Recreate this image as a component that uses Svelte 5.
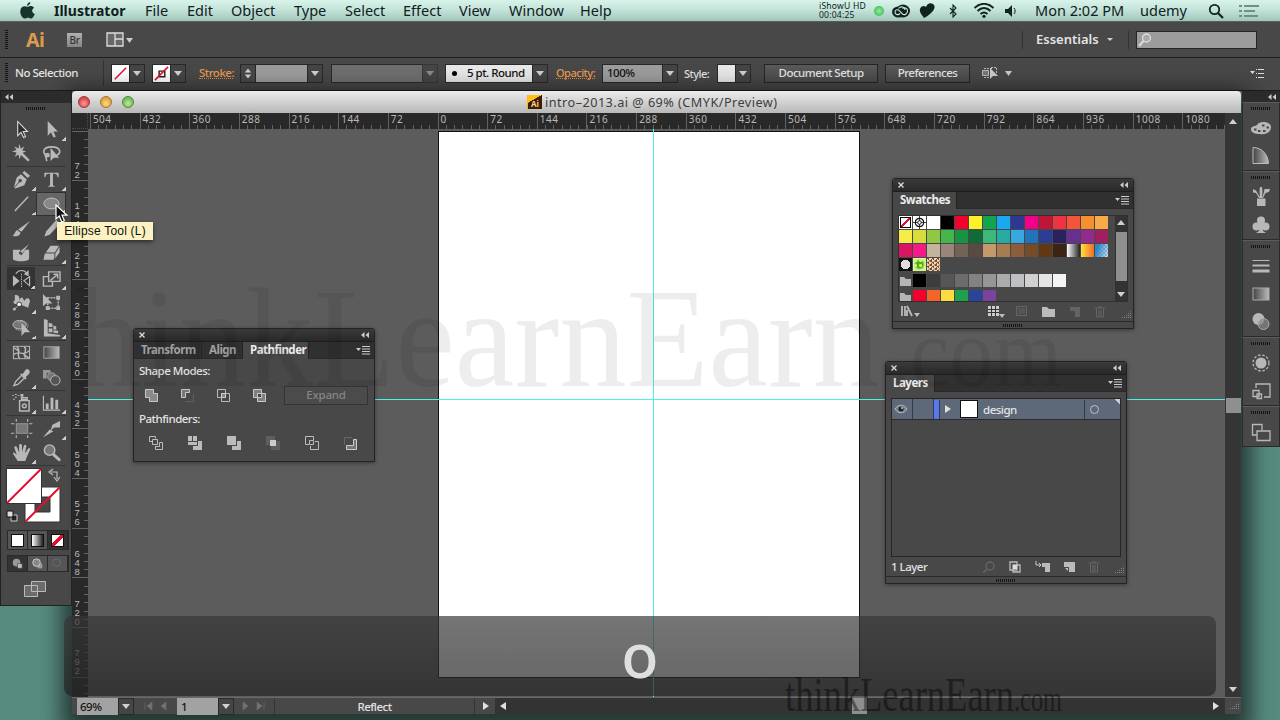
<script lang="ts">
	type Panel = { key: string; tabs: string[]; active: string };

	const menus = [
		{ label: 'File', width: 42 },
		{ label: 'Edit', width: 44 },
		{ label: 'Object', width: 63 },
		{ label: 'Type', width: 51 },
		{ label: 'Select', width: 58 },
		{ label: 'Effect', width: 56 },
		{ label: 'View', width: 50 },
		{ label: 'Window', width: 71 },
		{ label: 'Help', width: 50 }
	];

	// every icon lives in a 20x20 box and uses currentColor
	const F = 'fill="currentColor"';
	const S = 'fill="none" stroke="currentColor"';
	const icons: Record<string, string> = {
		select: `<path d="M6 1.500v15l3.500-3.500 2.600 5.500 2.200-1-2.500-5.300h4.500z" fill="#2e2e2e" stroke="#ddd" stroke-width="1.100"/>`,
		direct: `<path ${F} d="M6 1v15.500l3.500-3.500 2.600 5.500 2.400-1-2.500-5.500h4.700z"/>`,
		wand: `<path ${F} d="M8 0l1.200 5L13 2.500l-2.200 4.300 4.200.7-3.800 1.800 7.500 7.500-1.800 1.700-7.500-7L8 16l-1.200-5L3 13.500 4.800 9 0 8l4.700-1.700L2.500 2.500l4.300 2.300z"/>`,
		lasso: `<path ${S} stroke-width="1.700" d="M8 13C-1 12 0 3 10 3s11 7 5 9M6 10c-4 0-3 5 0 3s0-5-2 0l1 5"/><path ${F} d="M9 4v14l3.500-3.500H18z"/>`,
		pen: `<path ${F} d="M13 1l6 5-2.500 2.500-5.500-5.500z"/><path ${F} fill-rule="evenodd" d="M9.500 4.500l6 5.500-2.500 6-9.500 3.500-1.500-1.500L5 8zM9 9.500A1.800 1.800 0 1 0 9 13a1.800 1.800 0 0 0 0-3.500z"/><path d="M2.500 18.500l5-6" stroke="#484848"/>`,
		type: `<path ${F} d="M2.500 3h15v4.500h-1C16 5 15 4 13 4h-1.500v11.500c0 1 1 1.500 2 1.500v.7h-7V17c1 0 2-.5 2-1.500V4H7C5 4 4 5 3.500 7.500h-1z"/>`,
		line: `<path ${S} stroke-width="1.500" d="M3 18L17 3"/>`,
		ellipse: `<ellipse cx="10" cy="10" rx="8" ry="5.700" fill="#888" stroke="#c4c4c4"/>`,
		brush: `<path ${F} d="M19 2l-9 11.500-3.500-2.500zM5.500 11.500L9 14.500c-1 4-5 4-8.500 3 2.500-1 2-4 5-6z"/>`,
		pencil: `<path ${F} d="M15 1l4 4L8 16.500l-5.500 2 2-5.500z"/>`,
		blob: `<path ${F} d="M1 7h8l-2 4 3 2 4-6h4v10c-3 3-14 3-17 0zM18 1l-7 9.500-2.500-1.500z"/>`,
		eraser: `<path ${F} d="M9 3h9l-4.500 7H4zM3 11h10v5l-1 1.500H1.500zM14 11l4.500-7v6L14 16z"/>`,
		reflect: `<path ${F} d="M1 6.500v12l7-6z"/><path ${S} stroke-width="1.200" d="M18.500 8v9.500l-6-5zM4 5c3-4.500 9-4.500 12 0"/><path ${F} d="M17.500 1v6.500l-5-2z"/><path ${S} stroke-dasharray="1.500 1" d="M10 5v14"/>`,
		scale: `<path ${S} stroke-width="1.500" d="M7 3h12v10H7zM7 8H1.500v10H11v-5M9 12l7-6M12 5.500h4.500V10"/>`,
		warp: `<path ${F} d="M3 2c4 0 5 2 5 5.500 2-5.500 4-1.500 5 1 2-4 5-4 6 0l-2 7-5-2-8-2c-3 0-3-3-1-4z"/><path ${S} d="M2 17L17 6"/><circle cx="2.500" cy="17" r="1.500" ${F}/><circle cx="7.500" cy="12" r="2.500" fill="#eee" stroke="#333"/>`,
		free: `<path ${F} d="M1 1v13l3.500-3H11z"/><path ${S} stroke-width="1.500" stroke-dasharray="2 1" d="M6 5h11v11H6z"/><path ${F} d="M4 14h4v4H4zM15 14h4v4h-4zM15 3h4v4h-4z"/>`,
		shape: `<ellipse cx="8" cy="7" rx="7" ry="4.500" fill="#777" stroke="#bbb"/><path ${S} stroke-dasharray="1 1" d="M3 11c3 3 14 3 14-3-1-5-8-5-11-3"/><path ${F} d="M10 5v14l3.500-4H19z"/>`,
		perspective: `<path ${F} d="M2 1l4 1v14l13 2v1.500H2zM7 5l4 1v3.500H7zM7 11h4v4H7zM12 8l3 1v3h-3zM12 13l5 .5v2.500l-5-.5z"/>`,
		mesh: `<rect x="1.500" y="3.500" width="17" height="13" ${S}/><path ${S} stroke-width="1.500" d="M2 12c6-5 10 3 16-4M5 4c5 3-1 8 3 12M13 4c4 4-2 6 1 12M2 5l6 4M12 12l6 4"/>`,
		gradient: `<rect x="2" y="4" width="16" height="12" fill="url(#grayRamp)" stroke="#aaa"/>`,
		dropper: `<path ${F} d="M15 1c4 0 5 4 2 6l-2.500 2.500 1 1.500-2 1-5-5 1.500-1.500 1 1z"/><path ${S} stroke-width="1.500" d="M9.500 8.500L4 14l-2 4.500L6.500 17l6-6"/>`,
		blend: `<path ${F} d="M1 2h8v3H5v6H1z" opacity=".7"/><rect x="6" y="5" width="8" height="8" rx="3" fill="#777" stroke="#999"/><circle cx="14" cy="13" r="5" fill="#555" stroke="#bbb"/>`,
		spray: `<path ${F} d="M0 2h2v1H0zM3 1h2v1H3zM3 4h2v1H3zM6 2h2v1H6zM9 1h3v3H9zM1 6h2v1H1z"/><path ${S} stroke-width="1.500" d="M8 8h10v11H8zM10 5h6v2h-6z"/><circle cx="13" cy="13.500" r="2" ${S} stroke-width="1.500"/>`,
		graph: `<path ${S} stroke-width="1.200" d="M1.500 3v15H19"/><path ${F} d="M4 11h3v6H4zM9 5h3v12H9zM14 7h3v10h-3z"/>`,
		artboard: `<rect x="4.500" y="5" width="12" height="10" fill="#777" stroke="#999"/><path ${S} stroke-width="1.200" d="M4.500 0v3M16.500 0v3M-1 5h3.500M-1 15h3.500M18 5h3.500M18 15h3.500M4.500 17v3M16.500 17v3"/>`,
		slice: `<path ${F} d="M19 2v7h-6l-4 3 2-6zM8 11l4 2-11 6.500z"/>`,
		hand: `<path ${F} d="M6 19l-5-8c0-2 2-1 4 1.500L2.500 5c0-2 2-2 3 0l2 5V2.500c0-2 2.500-2 3 0v7l2-6.500c1-2 3-1 2.500 1l-1.500 7 3.500-5c1-1 3 0 2 1l-4 9-1 3z"/>`,
		zoom: `<path ${S} stroke-width="3.200" stroke-linecap="round" d="M12.500 12.500l5.500 5"/><circle cx="8" cy="7.500" r="5.500" fill="#777" stroke="#bbb" stroke-width="1.500"/>`,
		palette: `<path ${F} fill-rule="evenodd" d="M0 11c0-3 5-3 6-4 3-5 14-3 14 2s-5 8-11 7c-5 0-9-1-9-5zM3 10.500v2h2.500v-2zM7 12v2h2.500v-2zM12 12v2h2.500v-2zM15.500 8.500v2H18v-2zM11 6.500v2h2.500v-2z"/>`,
		guide: `<path d="M2 1.500c9 0 15 7 15.500 16H2z" fill="url(#grayRamp)" stroke="#bbb"/>`,
		brushes: `<path ${F} d="M6 11.500h8.500V19H6zM9 11L8.500 4 9 0h2l.5 4-.5 7zM8 11L5 6 2 5.500 2 2l3 1.500L9.500 11zM11 11l2-6 .5-3H19l-1 3-3.500 1L12 11z"/>`,
		club: `<circle cx="10" cy="5.500" r="4" ${F}/><circle cx="5.500" cy="11.500" r="4" ${F}/><circle cx="14.500" cy="11.500" r="4" ${F}/><path ${F} d="M9 8h2l1 8 3 2H5l3-2z"/>`,
		strokes: `<path ${F} d="M1.500 4h17v1h-17zM1.500 8.500h17v2h-17zM1.500 13.500h17v3h-17z"/>`,
		opacity: `<circle cx="7.500" cy="7" r="6" ${F}/><circle cx="12.500" cy="12" r="5.500" fill="#888" fill-opacity=".7" stroke="#aaa"/>`,
		appearance: `<circle cx="10" cy="10" r="5.500" ${F}/><circle cx="10" cy="10" r="8" ${S} stroke-width="1.300" stroke-dasharray="2.500 1.800"/>`,
		styles: `<path ${S} stroke-width="1.300" d="M5 7V3h14v13h-6M2 9.500h6v6H2zM6 13h4.500v4.500H6z"/>`,
		layers: `<path ${S} stroke-width="1.300" d="M6 13H1.500V2.500H11V8M6 9h13v9.500H6z"/>`
	};

	const toolGroups = [
		['select', 'direct', 'wand', 'lasso'],
		['pen', 'type', 'line', 'ellipse', 'brush', 'pencil', 'blob', 'eraser'],
		['reflect', 'scale', 'warp', 'free', 'shape', 'perspective'],
		['mesh', 'gradient', 'dropper', 'blend'],
		['spray', 'graph'],
		['artboard', 'slice', 'hand', 'zoom']
	];
	const noFlyout = ['select', 'wand', 'lasso', 'free', 'mesh', 'gradient', 'blend', 'brush', 'blob', 'artboard', 'zoom'];

	const dockGroups = [
		['palette', 'guide'],
		['brushes', 'club'],
		['strokes', 'gradient', 'opacity'],
		['appearance', 'styles'],
		['layers']
	];

	// rulers, 72pt steps at 69%
	const step = 49.66;
	const hMarks = Array.from({ length: 23 }, (_, i) => ({ x: 350 + (i - 7) * step, label: String(Math.abs(i - 7) * 72) }));
	const vMarks = Array.from({ length: 12 }, (_, i) => ({ y: 2 + i * step, digits: i ? String(i * 72).split('') : [] }));
	const hTicks = Array.from({ length: 138 }, (_, i) => 2.400 + i * (step / 6));
	const vTicks = Array.from({ length: 69 }, (_, i) => 2 + i * (step / 6));

	const swatchRows = [
		['none', 'reg', '#fff', '#000', '#f3002d', '#fdf12b', '#12a550', '#18aaf0', '#2e3791', '#f0008b', '#c21436', '#ef3340', '#f3543a', '#f78f2f', '#f9ab48'],
		['#f8ec48', '#d8dc3c', '#8fc843', '#46b54c', '#179343', '#0f6b37', '#3cb878', '#28aaa0', '#35a9e0', '#2174bb', '#2c3d93', '#29225f', '#673090', '#912c8f', '#9f1f5f'],
		['#d91663', '#f51b86', '#c2b59b', '#998579', '#736357', '#594a42', '#c49a6c', '#a77c50', '#8b5d3c', '#754c29', '#603913', '#3c2415', 'bw', 'orange', 'blue'],
		['spot', 'leaf', 'tex'],
		['folder', '#000', '#3c3c3c', '#565656', '#6c6c6c', '#828282', '#969696', '#aaabad', '#bebfc0', '#d0d0d0', '#e5e5e5', '#f4f4f4'],
		['folder', '#f3002d', '#f4652a', '#fddc42', '#1ca14e', '#29449a', '#7b439b']
	];

	const pathfinder: Panel = { key: 'pathfinder', tabs: ['Transform', 'Align', 'Pathfinder'], active: 'Pathfinder' };
	const swatches: Panel = { key: 'swatches', tabs: ['Swatches'], active: 'Swatches' };
	const layers: Panel = { key: 'layers', tabs: ['Layers'], active: 'Layers' };

	const shapeModes = [
		`<path d="M2.500 3.500h8v4h4v8h-8v-4h-4z" fill="#8a8a8a" stroke="#c8c8c8"/>`,
		`<path d="M2.500 11.500v-8h8v3h-4v5z" fill="#777" stroke="#c8c8c8"/><path d="M6.500 15.500h8v-8" fill="none" stroke="#777" stroke-dasharray="1 1"/>`,
		`<path d="M2.500 3.500h8v8h-8zM6.500 7.500h8v8h-8z" fill="none" stroke="#bbb"/><path d="M6.500 7.500h4v4h-4z" fill="#888" stroke="#ccc"/>`,
		`<path d="M2.500 3.500h8v8h-8zM6.500 7.500h8v8h-8z" fill="#808080" stroke="#c8c8c8"/><path d="M6.500 7.500h4v4h-4z" fill="#444" stroke="#c8c8c8"/>`
	];
	const finders = [
		`<path d="M2.500 7.500v-5h6v2M2.500 7.500h3M5.500 5.500h5v5h-5zM8.500 12v3.500h7v-7h-3v4h-4" fill="none" stroke="#bbb"/>`,
		`<path d="M2 2h4v5H2zM7 2h4v5H7zM2 8h9v3H2zM12 7h4v9H7v-4h5z" fill="#bbb"/>`,
		`<path d="M2 2h9v9H2zM12 7h4v9H7v-4h5z" fill="#bbb"/>`,
		`<path d="M2 2h9v9H2zM7 7h9v9H7z" fill="#5e5e5e"/><path d="M6 6h6v6H6z" fill="#ccc"/>`,
		`<path d="M6 10.500H2.500v-8h8V6M6.500 6.500h4v4h-4zM12 7.500h3.500v8h-8V12" fill="none" stroke="#bbb"/>`,
		`<path d="M2.500 11V3.500H10" fill="none" stroke="#666"/><path d="M11.500 5.500h3v10h-10v-4h7z" fill="#777" stroke="#ccc"/>`
	];
</script>

{#snippet icon(name: string)}
	<svg class="icon" viewBox="0 0 20 20">{@html icons[name]}</svg>
{/snippet}

{#snippet art(markup: string)}
	<svg class="art" viewBox="0 0 18 18">{@html markup}</svg>
{/snippet}

{#snippet drop()}
	<span class="drop"><i></i></span>
{/snippet}

{#snippet collapse()}
	<svg class="collapse" viewBox="0 0 8 6"><path d="M3.500 0v6L0 3zM8 0v6L4.500 3z" fill="#ccc" /></svg>
{/snippet}

{#snippet flyout()}
	<svg class="flyout" viewBox="0 0 14 9"><path d="M0 2h5L2.500 5zM6 0h8v1H6zM6 2.500h8v1H6zM6 5h8v1H6zM6 7.500h8v1H6z" fill="#ccc" /></svg>
{/snippet}

{#snippet panelTop(panel: Panel)}
	<header class="panel-head">
		<svg class="close" viewBox="0 0 6 6"><path d="M.5.5l5 5M5.500.5l-5 5" stroke="#ddd" stroke-width="1.300" /></svg>
		{@render collapse()}
	</header>
	<div class="tabs">
		{#each panel.tabs as tab}
			<span class="tab" class:active={tab === panel.active}>{tab}</span>
		{/each}
		{@render flyout()}
	</div>
{/snippet}

<div class="desktop">
	<svg class="defs" width="0" height="0">
		<defs>
			<linearGradient id="grayRamp"><stop stop-color="#444" /><stop offset="1" stop-color="#bbb" /></linearGradient>
		</defs>
	</svg>

	<nav class="menubar">
		<svg class="apple" viewBox="0 0 16 18">
			<path fill="#17332e" d="M11 0c0 2-1.500 4-3.500 4C7.500 2 9 .5 11 0zM8 5c1 0 2-1 4-.8 1.500.2 2.500 1 3 1.800-3 2-2.500 5.500.8 6.700C15 15 13.500 17.500 12 17.500c-1.500 0-2-.8-3.500-.8s-2 .8-3.500.8C2.500 17.500 0 13 .3 9.500.5 6 3 4.500 5 4.500c1.200 0 2 .5 3 .5z" />
		</svg>
		<b class="app">Illustrator</b>
		{#each menus as menu}
			<span class="menu" style="width:{menu.width}px">{menu.label}</span>
		{/each}
		<div class="tray">
			<span class="recorder">iShowU HD<br />00:04:25</span>
			<span class="green"></span>
			<svg width="18" height="14" viewBox="0 0 18 14"><ellipse cx="6.500" cy="8" rx="6.500" ry="5.500" fill="#10231f" /><ellipse cx="11" cy="7" rx="7" ry="6.500" fill="#10231f" /><path d="M8 9.500c-2 2-5 1-5-1.500s3-3 4.500-1l3 3c2 1.500 5 0 5-3s-3-4-5-2.500M6.500 4.500C9 1.500 13 3 13 6" fill="none" stroke="#cfe8df" stroke-width="1.100" /></svg>
			<svg width="17" height="16" viewBox="0 0 17 16"><path d="M5 15C3 12 0 9 1 6c1-3 4-4 6-2 1-3 4-5 7-3 4 3 0 9-9 14z" fill="#10231f" /></svg>
			<svg width="9" height="14" viewBox="0 0 9 14"><path d="M1 4l6 6-3 3V1l3 3-6 6" fill="none" stroke="#10231f" stroke-width="1.100" /></svg>
			<svg width="22" height="15" viewBox="0 0 22 15"><path d="M1.500 5c6-5.500 13-5.500 19 0M4.500 8c4-4 9-4 13 0M7.500 11c2.500-2.200 4.500-2.200 7 0" fill="none" stroke="#10231f" stroke-width="2" /><circle cx="11" cy="13.300" r="1.600" fill="#10231f" /></svg>
			<svg width="13" height="12" viewBox="0 0 13 12"><path d="M1 4h3l4-4v12L4 8H1z" fill="#10231f" /><path d="M10 3c1.500 2 1.500 4 0 6" fill="none" stroke="#10231f" /></svg>
			<span class="clock">Mon 2:02 PM</span>
			<span class="user">udemy</span>
			<svg width="16" height="16" viewBox="0 0 16 16"><circle cx="6.500" cy="6.500" r="4.700" fill="none" stroke="#10231f" stroke-width="1.800" /><path d="M10 10l5 5" stroke="#10231f" stroke-width="2.200" /></svg>
			<svg class="list" width="22" height="14" viewBox="0 0 22 14"><path d="M1 2h3M6 2h15M1 7h3M6 7h11M1 12h3M6 12h14" stroke="#6f8f87" stroke-width="2" /></svg>
		</div>
	</nav>

	<div class="appbar">
		<span class="grip-v"></span>
		<b class="ai">Ai</b>
		<span class="br">Br</span>
		<svg class="arrange" width="28" height="16" viewBox="0 0 28 16"><path d="M1 1h16v13H1zM9 1v13M9 7h8" fill="#686868" stroke="#ddd" stroke-width="1.300" /><path d="M20 6h7l-3.500 5z" fill="#ccc" /></svg>
		<div class="workspace">Essentials <i class="tri small"></i></div>
		<div class="search">
			<svg width="14" height="14" viewBox="0 0 14 14"><circle cx="8.500" cy="5" r="4" fill="#aaa" stroke="#ddd" stroke-width="1.300" /><path d="M5.500 8L1 13" stroke="#ddd" stroke-width="2" /></svg>
		</div>
	</div>

	<div class="control">
		<span class="grip-v"></span>
		<span class="selection">No Selection</span>
		<div class="combo first">
			<span class="paint"><svg viewBox="0 0 18 18"><path d="M3 15L15 3" stroke="#e0102f" stroke-width="1.600" /></svg></span>
			{@render drop()}
		</div>
		<div class="combo second">
			<span class="paint"><svg viewBox="0 0 18 18"><path d="M6.500 6.500h6v6h-6z" fill="none" stroke="#222" stroke-width="1.500" /><path d="M2 16L16 2" stroke="#e0102f" stroke-width="1.600" /></svg></span>
			{@render drop()}
		</div>
		<span class="link stroke">Stroke:</span>
		<div class="combo weight">
			<span class="spin"><i class="up"></i><i class="tri"></i></span>
			<span class="field"></span>
			{@render drop()}
		</div>
		<div class="combo profile"><span class="field dim"></span>{@render drop()}</div>
		<div class="combo brushdef"><span class="field light"><em></em>5 pt. Round</span>{@render drop()}</div>
		<span class="link opac">Opacity:</span>
		<div class="combo pct"><span class="field">100%</span>{@render drop()}</div>
		<span class="style-label">Style:</span>
		<div class="combo style-pick"><span class="field light"></span>{@render drop()}</div>
		<button class="setup">Document Setup</button>
		<button class="prefs">Preferences</button>
		<svg class="isolate" width="30" height="14" viewBox="0 0 30 14"><path d="M.5 4.500h6v5h-6z" fill="#777" stroke="#bbb" /><path d="M9 1.500h5.500v7M2 2.500h8M2 11.500h6" fill="none" stroke="#bbb" stroke-dasharray="2 1" /><path d="M8 2v11l3-3h5z" fill="#ccc" /><path d="M23 5h7l-3.500 5z" fill="#ccc" /></svg>
		<svg class="ctl-menu" width="14" height="11" viewBox="0 0 14 11"><path d="M0 3h5L2.500 6zM6 1h1v1H6zM8 1h6v1H8zM6 5h1v1H6zM8 5h6v1H8zM6 9h1v1H6zM8 9h6v1H8z" fill="#ddd" /></svg>
	</div>

	<section class="document">
		<div class="titlebar">
			<span class="light red"></span><span class="light amber"></span><span class="light lime"></span>
			<div class="title">
				<span class="doc-icon">Ai</span>
				<span>intro–2013.ai @ 69% (CMYK/Preview)</span>
			</div>
		</div>
		<div class="workarea">
			<div class="ruler-corner"></div>
			<svg class="ruler-h" width="1137" height="16" viewBox="0 0 1137 16">
				{#each hTicks as x}<path d="M{x} 12v4" />{/each}
				{#each hMarks as mark}
					<path d="M{mark.x} 0v16" />
					<text x={mark.x + 2.500} y="10">{mark.label}</text>
				{/each}
			</svg>
			<div class="scroll-v">
				<i class="up"></i>
				<span class="thumb"></span>
				<i class="tri"></i>
			</div>
			<svg class="ruler-v" width="16" height="568" viewBox="0 0 16 568">
				{#each vTicks as y}<path d="M12 {y}h4" />{/each}
				{#each vMarks as mark}
					<path d="M0 {mark.y}h16" />
					{#each mark.digits as digit, i}
						<text x="2.500" y={mark.y - 3 - (mark.digits.length - 1 - i) * 9}>{digit}</text>
					{/each}
				{/each}
			</svg>
			<div class="canvas">
				<div class="artboard"></div>
				<span class="guide-h"></span>
				<span class="guide-v"></span>
			</div>
		</div>
		<footer class="status">
			<span class="num">69%</span>{@render drop()}
			<svg class="nav" width="24" height="10" viewBox="0 0 24 10"><path d="M2 1v8M9 1v8L4 5zM23 1v8l-5-4z" fill="#717171" stroke="#717171" stroke-width=".6" /></svg>
			<span class="num">1</span>{@render drop()}
			<svg class="nav fwd" width="24" height="10" viewBox="0 0 24 10"><path d="M22 1v8M15 1v8l5-4zM1 1v8l5-4z" fill="#717171" stroke="#717171" stroke-width=".6" /></svg>
			<span class="current">Reflect</span>
			<i class="right"></i>
			<div class="scroll-h"><i class="left"></i><span class="thumb"></span><i class="right"></i></div>
			<span class="resize"></span>
		</footer>
	</section>

	<aside class="tools">
		<div class="dock-head">{@render collapse()}</div>
		<span class="grip"></span>
		{#each toolGroups as group}
			<div class="tool-group">
				{#each group as tool}
					<span class="tool" class:hover={tool === 'ellipse'} class:current-tool={tool === 'reflect'}>
						{@render icon(tool)}
						{#if !noFlyout.includes(tool)}<i class="more"></i>{/if}
					</span>
				{/each}
			</div>
		{/each}
		<svg class="fillstroke" width="64" height="60" viewBox="0 0 64 60">
			<path d="M21 20h35v35H21zM31 30v15h15V30z" fill="#fff" stroke="#333" fill-rule="evenodd" />
			<path d="M21.500 54.500l34-34" stroke="#e0102f" stroke-width="2" />
			<rect x="2.500" y="1.500" width="35" height="35" fill="#fff" stroke="#333" />
			<path d="M3 36L37 2" stroke="#e0102f" stroke-width="2" />
			<path d="M47 5h6v7M49 2l-4 3 4 3M50 10l3 4 3-4" fill="none" stroke="#bbb" stroke-width="1.200" />
			<path d="M7 48h6v6H7z" fill="#222" stroke="#ccc" /><path d="M3 44h6v6H3z" fill="#ddd" stroke="#111" />
		</svg>
		<div class="trio">
			<span><b class="solid"></b></span><span><b class="grad"></b></span><span class="on"><b class="none"></b></span>
		</div>
		<div class="trio modes">
			<span class="on"><svg viewBox="0 0 20 15"><circle cx="9" cy="7" r="4" fill="#999" /><path d="M10 8h5v5h-5z" fill="#bbb" stroke="#333" stroke-width=".6" /></svg></span>
			<span><svg viewBox="0 0 20 15"><path d="M10 8h5v5h-5z" fill="#999" /><circle cx="9" cy="7" r="4" fill="#888" stroke="#ccc" /></svg></span>
			<span><svg viewBox="0 0 20 15"><circle cx="9" cy="7" r="4" fill="#555" stroke="#6c6c6c" /></svg></span>
		</div>
		<svg class="screen" width="22" height="17" viewBox="0 0 22 17"><path d="M.5 4.500h13v11H.5zM7.500.5h14v10h-14z" fill="#6b6b6b" stroke="#bbb" /></svg>
	</aside>

	<aside class="dock">
		<div class="dock-head">{@render collapse()}</div>
		{#each dockGroups as group}
			<div class="dock-group">
				<span class="grip"></span>
				{#each group as name}
					<span class="dock-item">{@render icon(name)}</span>
				{/each}
			</div>
		{/each}
	</aside>

	<section class="panel pathfinder">
		{@render panelTop(pathfinder)}
		<div class="pf-body">
			<p>Shape Modes:</p>
			<div class="pf-row modes-row">
				{#each shapeModes as mode}{@render art(mode)}{/each}
				<button class="expand">Expand</button>
			</div>
			<p class="second-label">Pathfinders:</p>
			<div class="pf-row finder-row">
				{#each finders as finder}{@render art(finder)}{/each}
			</div>
		</div>
	</section>

	<section class="panel swatches">
		{@render panelTop(swatches)}
		<div class="sw-body">
			<div class="sw-list">
				{#each swatchRows as row}
					<div class="sw-row">
						{#each row as color}
							{#if color.startsWith('#')}
								<span class="chip" style="background:{color}"></span>
							{:else}
								<span class="chip {color}">
									{#if color === 'reg'}
										<svg viewBox="0 0 13 13"><path d="M6.500 0v13M0 6.500h13" stroke="#111" stroke-width=".8" /><circle cx="6.500" cy="6.500" r="4.200" fill="none" stroke="#111" stroke-width="1.200" /><circle cx="6.500" cy="6.500" r="1.800" fill="#fff" stroke="#111" /></svg>
									{:else if color === 'folder'}
										<svg viewBox="0 0 13 13"><path d="M1 3h4l2 2h5v7H1z" fill="#b5b5b5" /></svg>
									{/if}
								</span>
							{/if}
						{/each}
					</div>
				{/each}
			</div>
			<div class="sw-scroll"><i class="up"></i><span></span><i class="tri"></i></div>
		</div>
		<div class="panel-tools">
			<svg width="19" height="14" viewBox="0 0 19 14"><path d="M1 1v10M4 1v10M6 1l5 10M6 5v6" stroke="#bbb" stroke-width="1.800" /><path d="M13 8h6l-3 4z" fill="#bbb" /></svg>
			<svg class="kind" width="17" height="12" viewBox="0 0 17 12"><path d="M0 0h11v10H0z" fill="#ccc" /><path d="M3.500 0v10M7.500 0v10M0 3.500h11M0 6.500h11" stroke="#333" /><path d="M11 8h6l-3 4z" fill="#bbb" /></svg>
			<svg class="dim-icon" width="11" height="11" viewBox="0 0 11 11"><path d="M.5.5h10v9H.5zM2 3h7M2 5h7M2 7h7" fill="none" stroke="#666" /></svg>
			<svg width="13" height="11" viewBox="0 0 13 11"><path d="M0 1h5l2 2h6v8H0z" fill="#bbb" /></svg>
			<svg width="11" height="11" viewBox="0 0 11 11"><path d="M1 1h10v10H6V5H1z" fill="#636363" /></svg>
			<svg width="10" height="12" viewBox="0 0 10 12"><path d="M0 2h10M3 1h4M1.500 3v8h7V3M4 4v6M6 4v6" fill="none" stroke="#666" /></svg>
			<span class="resize"></span>
		</div>
		<div class="panel-foot"><span class="grip"></span></div>
	</section>

	<section class="panel layers">
		{@render panelTop(layers)}
		<div class="layer-list">
			<div class="layer">
				<span class="eye"><svg width="14" height="10" viewBox="0 0 14 10"><path d="M1 5c3-5 9-5 12 0-3 5-9 5-12 0z" fill="#75808e" stroke="#b5bcc6" /><circle cx="7" cy="5" r="2.500" fill="#222" /><circle cx="8" cy="4" r="1" fill="#ccc" /></svg></span>
				<span class="lock"></span>
				<span class="tint"></span>
				<i class="right"></i>
				<span class="preview"></span>
				<span class="layer-name">design</span>
				<span class="target"><b></b></span>
			</div>
		</div>
		<div class="panel-tools layer-tools">
			<span class="count">1 Layer</span>
			<svg width="12" height="12" viewBox="0 0 12 12"><circle cx="7" cy="5" r="4" fill="none" stroke="#666" stroke-width="1.300" /><path d="M4 8l-4 4" stroke="#666" stroke-width="1.500" /></svg>
			<svg width="12" height="12" viewBox="0 0 12 12"><path d="M1 1h7v8H1zM4 4h7v7H4z" fill="none" stroke="#bbb" stroke-width="1.300" /><path d="M4 4h4v4H4z" fill="#ddd" /></svg>
			<svg width="15" height="12" viewBox="0 0 15 12"><path d="M1 0v4h4M4 2l2 2-2 2" fill="none" stroke="#ccc" /><path d="M7 2h8v9h-5V6H7z" fill="#bbb" /></svg>
			<svg width="11" height="12" viewBox="0 0 11 12"><path d="M0 1h11v10H5V6H0zM1 7h3v3z" fill="#bbb" /></svg>
			<svg width="10" height="12" viewBox="0 0 10 12"><path d="M0 2h10M3 1h4M1.500 3v8h7V3M4 4v6M6 4v6" fill="none" stroke="#666" /></svg>
			<span class="resize"></span>
		</div>
		<div class="panel-foot"><span class="grip"></span></div>
	</section>

	<div class="big-mark">
		<svg class="watermark" width="1208" height="720" viewBox="72 0 1208 720">
			<g opacity=".065">
				<text x="37" y="386" font-size="142" textLength="843" lengthAdjust="spacingAndGlyphs">thinkLearnEarn</text>
				<text x="888" y="386" font-size="100" textLength="174" lengthAdjust="spacingAndGlyphs">.com</text>
			</g>
		</svg>
	</div>

	<div class="keycast">o</div>

	<svg class="watermark" width="1280" height="720" viewBox="0 0 1280 720">
		<g opacity=".42">
			<text x="785" y="711" font-size="48" textLength="229" lengthAdjust="spacingAndGlyphs">thinkLearnEarn</text>
			<text x="1014" y="711" font-size="36" textLength="48" lengthAdjust="spacingAndGlyphs">.com</text>
		</g>
	</svg>

	<div class="tooltip">Ellipse Tool (L)</div>
	<svg class="cursor" width="14" height="20" viewBox="0 0 14 20"><path d="M1 1v14l3.300-3 2.500 6 2.600-1.200-2.400-5.600H12z" fill="#111" stroke="#fff" stroke-width="1.200" /></svg>
</div>

<style>
	:global(body) {
		margin: 0;
	}
	.desktop {
		position: relative;
		width: 1280px;
		height: 720px;
		overflow: hidden;
		background: #588b80;
		font-family: 'Noto Sans', 'Open Sans', sans-serif;
		font-size: 11.5px;
		font-weight: 500;
		letter-spacing: -0.500px;
		line-height: 1;
		color: #e3e3e3;
	}
	.desktop :global(svg) {
		display: block;
		flex: none;
	}
	.defs {
		position: absolute;
	}
	i {
		display: block;
		flex: none;
	}
	i.tri,
	.drop i {
		border: 4px solid transparent;
		border-top: 5px solid #d0d0d0;
		border-bottom: 0;
	}
	i.tri.small {
		border-width: 3px;
		border-top-width: 3px;
		border-bottom: 0;
	}
	i.up {
		border: 4px solid transparent;
		border-bottom: 5px solid #d0d0d0;
		border-top: 0;
	}
	i.right {
		border: 4px solid transparent;
		border-left: 6px solid #e0e0e0;
		border-right: 0;
	}
	i.left {
		border: 4px solid transparent;
		border-right: 6px solid #e0e0e0;
		border-left: 0;
	}
	.grip {
		display: block;
		width: 20px;
		height: 3px;
		margin: 0 auto;
		background: repeating-linear-gradient(90deg, #151515 0 1px, #484848 1px 2px);
	}
	.grip-v {
		width: 3px;
		height: 20px;
		margin-left: 5px;
		background: repeating-linear-gradient(#151515 0 1px, #484848 1px 2px);
	}
	.resize {
		width: 11px;
		height: 8px;
		background: conic-gradient(transparent 75%, #858585 0) 0 0 / 2px 2px;
		clip-path: polygon(100% 0, 100% 100%, 0 100%);
	}

	/* menu bar */
	.menubar {
		display: flex;
		align-items: center;
		box-sizing: border-box;
		height: 22px;
		border-bottom: 1px solid #52635e;
		background: linear-gradient(#d8f3ea, #c2e2d8 50%, #a2c5ba);
		color: #10201d;
		font-size: 14.500px;
		font-weight: 400;
		letter-spacing: 0;
		white-space: nowrap;
	}
	.apple {
		width: 15px;
		height: 17px;
		margin-left: 20px;
	}
	.app {
		width: 91px;
		margin-left: 19px;
		font-size: 14px;
	}
	.tray {
		display: flex;
		align-items: center;
		margin-left: auto;
	}
	.recorder {
		font-size: 8.600px;
		line-height: 8.500px;
		letter-spacing: 0.200px;
	}
	.green {
		width: 10px;
		height: 10px;
		margin: 0 8px 0 8px;
		border-radius: 50%;
		background: radial-gradient(#8ff09a, #2fac4a);
	}
	.tray svg:nth-of-type(2) {
		margin-left: 9px;
	}
	.tray svg:nth-of-type(3) {
		margin-left: 13px;
	}
	.tray svg:nth-of-type(4) {
		margin-left: 15px;
	}
	.tray svg:nth-of-type(5) {
		margin-left: 9px;
	}
	.clock {
		width: 89px;
		margin-left: 18px;
	}
	.user {
		width: 49px;
		margin: 0 19px 0 16px;
	}
	.list {
		margin: 0 20px 0 14px;
	}

	/* application bar */
	.appbar,
	.control {
		display: flex;
		align-items: center;
		box-sizing: border-box;
		background: #484848;
		border-bottom: 1px solid #1d1d1d;
		white-space: nowrap;
	}
	.appbar {
		height: 36px;
	}
	.ai {
		width: 19px;
		margin-left: 18px;
		font-size: 19.500px;
		color: #dc9b4c;
	}
	.br {
		width: 15px;
		height: 14px;
		margin-left: 22px;
		background: linear-gradient(#b0b0b0, #858585);
		color: #333;
		font-size: 10px;
		line-height: 15px;
		text-align: center;
	}
	.arrange {
		margin-left: 24px;
	}
	.workspace {
		display: flex;
		align-items: center;
		justify-content: space-between;
		box-sizing: border-box;
		width: 107px;
		height: 18px;
		margin-left: auto;
		padding: 0 15px 0 13px;
		border: solid #333;
		border-width: 0 1px;
		font-size: 13px;
		font-weight: 600;
		letter-spacing: 0;
	}
	.search {
		box-sizing: border-box;
		width: 121px;
		height: 18px;
		margin: 0 23px 0 7px;
		padding: 1px;
		border: 1px solid #252525;
		background: #9c9c9c;
	}

	/* control bar */
	.control {
		height: 33px;
		padding-bottom: 2px;
	}
	.selection {
		width: 88px;
		margin-left: 7px;
		border-right: 1px solid #333;
		line-height: 26px;
	}
	.combo {
		display: flex;
		height: 19px;
	}
	.drop {
		display: flex;
		align-items: center;
		justify-content: center;
		box-sizing: border-box;
		width: 16px;
		height: 19px;
		border: 1px solid #292929;
		background: #454545;
	}
	.field,
	.paint {
		display: flex;
		align-items: center;
		box-sizing: border-box;
		height: 19px;
		border: 1px solid #292929;
		border-right: 0;
		background: #9c9c9c;
		color: #111;
	}
	.paint {
		width: 18px;
		background: #fff;
	}
	.field.light {
		background: #e8e8e8;
	}
	.field.dim {
		background: #6f6f6f;
	}
	.first {
		margin-left: 7px;
	}
	.second {
		margin-left: 7px;
	}
	.link {
		border-bottom: 1px dotted #dc9148;
		color: #e79a4e;
	}
	.stroke {
		width: 34px;
		margin-left: 13px;
		font-size: 11.500px;
	}
	.spin {
		display: flex;
		flex-direction: column;
		align-items: center;
		justify-content: space-between;
		box-sizing: border-box;
		width: 15px;
		padding: 3px 0;
		border: 1px solid #292929;
		border-right: 0;
	}
	.spin i {
		transform: scale(0.800);
	}
	.weight {
		margin-left: 7px;
	}
	.weight .field {
		width: 52px;
	}
	.profile {
		margin-left: 8px;
	}
	.profile .field {
		width: 91px;
	}
	.profile .drop {
		opacity: 0.500;
	}
	.brushdef {
		margin-left: 7px;
	}
	.brushdef .field {
		width: 87px;
		padding-left: 6px;
	}
	.brushdef em {
		width: 5px;
		height: 5px;
		margin-right: 10px;
		border-radius: 50%;
		background: #000;
	}
	.opac {
		width: 39px;
		margin-left: 8px;
		font-size: 11px;
	}
	.pct {
		margin-left: 7px;
	}
	.pct .field {
		width: 60px;
		padding-left: 4px;
	}
	.style-label {
		width: 26px;
		margin-left: 6px;
		font-size: 11px;
	}
	.style-pick {
		margin-left: 7px;
	}
	.style-pick .field {
		width: 18px;
	}
	button {
		box-sizing: border-box;
		height: 19px;
		padding: 0;
		border: 1px solid #262626;
		background: linear-gradient(#5a5a5a, #4a4a4a);
		color: #e3e3e3;
		font: inherit;
		letter-spacing: inherit;
	}
	.setup {
		width: 114px;
		margin-left: 13px;
	}
	.prefs {
		width: 85px;
		margin-left: 7px;
	}
	.isolate {
		margin-left: 12px;
	}
	.ctl-menu {
		margin: 0 16px 0 auto;
	}

	/* document window */
	.document {
		position: absolute;
		left: 72px;
		top: 91px;
		width: 1169px;
		height: 623px;
		border-radius: 4px 4px 0 0;
		background: #333;
		box-shadow: 0 10px 22px 10px rgba(0, 0, 0, 0.600);
	}
	.titlebar {
		display: flex;
		align-items: center;
		box-sizing: border-box;
		height: 22px;
		padding-left: 6px;
		border-radius: 4px 4px 0 0;
		background: linear-gradient(#ececec, #b8b8b8);
		color: #3d3d3d;
	}
	.light.red,
	.light.amber,
	.light.lime {
		box-sizing: border-box;
		width: 12px;
		height: 12px;
		margin-right: 10px;
		border: 1px solid #a03434;
		border-radius: 50%;
		background: radial-gradient(circle at 50% 65%, #ff9b96, #d9484c 65%);
	}
	.light.amber {
		border-color: #a4722f;
		background: radial-gradient(circle at 50% 65%, #ffdf82, #e0a13e 65%);
	}
	.light.lime {
		border-color: #51833b;
		background: radial-gradient(circle at 50% 65%, #c1eb98, #77ba58 65%);
	}
	.title {
		display: flex;
		align-items: center;
		margin-left: 382px;
		font-size: 12.700px;
		font-weight: 400;
		letter-spacing: 0.460px;
		white-space: nowrap;
	}
	.doc-icon {
		width: 14px;
		height: 14px;
		margin: 0 3px 0 1px;
		border-left: 1px solid #fb0;
		background: linear-gradient(150deg, #ffc01c 35%, #3d1c06 36%);
		color: #ffd08a;
		font-size: 8px;
		font-weight: 700;
		letter-spacing: 0;
		line-height: 18px;
		text-align: center;
	}
	.workarea {
		display: grid;
		grid-template: 16px 568px / 16px 1137px 16px;
		border-bottom: 1px solid #6a6a6a;
	}
	.ruler-corner {
		background: #292929;
		border: dotted #4e4e4e;
		border-width: 0 1px 1px 0;
		box-sizing: border-box;
	}
	.ruler-h,
	.ruler-v {
		background: #292929;
	}
	.ruler-h path,
	.ruler-v path {
		stroke: #626262;
		shape-rendering: crispEdges;
	}
	.ruler-h text,
	.ruler-v text {
		fill: #b8b8b8;
		font-family: 'Noto Sans', sans-serif;
		font-size: 10px;
		font-weight: 400;
		letter-spacing: 0.500px;
	}
	.ruler-v text {
		font-family: 'Liberation Sans', Arial, sans-serif;
		font-size: 9.500px;
	}
	.scroll-v {
		display: flex;
		flex-direction: column;
		align-items: center;
		grid-row: 1 / 3;
		grid-column: 3;
		box-sizing: border-box;
		padding: 6px 0 5px;
		background: #353535;
	}
	.scroll-v .thumb {
		width: 15px;
		height: 15px;
		margin: 274px 0 auto;
		background: #8f8f8f;
	}
	.canvas {
		position: relative;
		background: #5c5c5c;
	}
	.artboard {
		width: 420px;
		height: 545px;
		margin: 2px 0 0 350px;
		border: 1px solid #111;
		background: #fff;
	}
	.guide-h,
	.guide-v {
		position: absolute;
		background: #4ff0e8;
	}
	.guide-h {
		left: 0;
		right: 0;
		top: 270px;
		height: 1px;
	}
	.guide-v {
		left: 565px;
		top: 0;
		bottom: 0;
		width: 1px;
	}
	.status {
		display: flex;
		align-items: center;
		height: 16px;
		padding-left: 5px;
		background: #484848;
	}
	.status .drop {
		height: 17px;
	}
	.num {
		box-sizing: border-box;
		width: 41px;
		padding-left: 3px;
		background: #a2a2a2;
		color: #151515;
		line-height: 17px;
	}
	.nav {
		margin: 0 10px 0 9px;
	}
	.nav.fwd {
		margin: 0 7px 0 8px;
	}
	.nav + .num {
		padding-left: 4px;
	}
	.nav + .current {
		width: 199px;
		margin-left: 1px;
		border: solid #353535;
		border-width: 0 1px;
		line-height: 17px;
		text-align: center;
	}
	.current + i {
		margin-left: 8px;
	}
	.scroll-h {
		display: flex;
		align-items: center;
		flex: 1;
		height: 16px;
		margin-left: 6px;
		padding-left: 5px;
		background: #333;
	}
	.scroll-h .thumb {
		width: 15px;
		height: 16px;
		margin: 0 auto 0 346px;
		background: #8f8f8f;
	}
	.scroll-h .right {
		margin-right: 6px;
	}
	.status .resize {
		margin: 0 2px 0 3px;
	}

	/* tools */
	.dock-head {
		display: flex;
		align-items: center;
		box-sizing: border-box;
		height: 12px;
		padding: 0 4px;
		background: #2b2b2b;
	}
	.collapse {
		width: 8px;
		height: 6px;
	}
	.tools {
		position: absolute;
		left: 0;
		top: 91px;
		box-sizing: border-box;
		width: 72px;
		height: 515px;
		border: solid #222;
		border-width: 0 1px 1px;
		background: #484848;
	}
	.tools > .grip {
		margin: 4px 25px 7px;
	}
	.tool-group {
		display: grid;
		grid-template-columns: 30px 30px;
		grid-auto-rows: 24.500px;
		width: 60px;
		margin-left: 5px;
		border-bottom: 1px solid #363636;
	}
	.tool {
		position: relative;
		display: flex;
		align-items: center;
		justify-content: center;
		color: #b9b9b9;
	}
	.icon {
		width: 20px;
		height: 20px;
	}
	.tool .icon {
		width: 19px;
		height: 19px;
		overflow: visible;
	}
	.tool.hover {
		margin: 1px;
		background: #666;
		outline: 1px solid #303030;
	}
	.tool.current-tool {
		margin: 1px;
		background: #333;
	}
	.more {
		position: absolute;
		right: 0;
		bottom: 1px;
		border: 4px solid transparent;
		border-width: 4px 0 0 4px;
		background: linear-gradient(135deg, transparent 50%, #ccc 50%);
		background-origin: border-box;
	}
	.fillstroke {
		margin: 1px 0 0 3px;
	}
	.trio {
		display: grid;
		grid-template-columns: repeat(3, 20px);
		width: 60px;
		margin: 4px 0 0 7px;
		outline: 1px solid #2a2a2a;
	}
	.trio span {
		display: flex;
		align-items: center;
		justify-content: center;
		box-sizing: border-box;
		height: 18px;
		border-right: 1px solid #2a2a2a;
		background: #555;
	}
	.trio .on {
		background: #333;
	}
	.trio b {
		width: 11px;
		height: 11px;
		border: 1px solid #111;
		background: #fff;
	}
	.trio .grad {
		background: linear-gradient(90deg, #fff, #222);
	}
	.trio .none {
		background: linear-gradient(135deg, #fff 38%, #e0102f 38% 62%, #fff 62%);
	}
	.trio.modes {
		margin-top: 7px;
	}
	.trio.modes span {
		height: 15px;
	}
	.modes svg {
		width: 19px;
	}
	.screen {
		margin: 10px 0 0 23px;
	}

	/* right dock */
	.dock {
		position: absolute;
		left: 1242px;
		top: 91px;
		width: 38px;
		background: #484848;
	}
	.dock .dock-head {
		height: 11px;
		justify-content: flex-end;
	}
	.dock-group {
		display: flex;
		flex-direction: column;
		align-items: center;
		box-sizing: border-box;
		padding: 4px 0 0;
		border: 1px solid #2a2a2a;
		border-top-color: #5c5c5c;
	}
	.dock-group .grip {
		margin-bottom: 4px;
	}
	.dock-item {
		display: flex;
		align-items: center;
		height: 28px;
		color: #b8b8b8;
	}

	/* floating panels */
	.panel {
		position: absolute;
		box-sizing: border-box;
		border: 1px solid #232323;
		border-radius: 3px 3px 0 0;
		background: #484848;
		box-shadow: 0 1px 4px rgba(0, 0, 0, 0.400);
	}
	.panel-head {
		display: flex;
		align-items: center;
		justify-content: space-between;
		box-sizing: border-box;
		height: 13px;
		padding: 0 5px;
		border-bottom: 1px solid #1e1e1e;
		background: linear-gradient(#3a3a3a, #292929);
	}
	.close {
		width: 6px;
		height: 6px;
	}
	.tabs {
		display: flex;
		align-items: center;
		box-sizing: border-box;
		height: 17px;
		background: #303030;
		border-bottom: 1px solid #2a2a2a;
	}
	.tab {
		box-sizing: border-box;
		height: 17px;
		padding: 0 6px 0 7px;
		border-right: 1px solid #242424;
		color: #a0a0a0;
		font-weight: 700;
		line-height: 16px;
	}
	.tab.active {
		background: #484848;
		color: #ececec;
	}
	.flyout {
		width: 14px;
		height: 9px;
		margin: 0 4px 0 auto;
	}
	.panel-tools {
		display: flex;
		align-items: center;
		height: 19px;
	}
	.panel-foot {
		height: 7px;
		padding-top: 2px;
		box-sizing: border-box;
		border-top: 1px solid #2a2a2a;
	}
	.art {
		width: 18px;
		height: 18px;
	}

	.pathfinder {
		left: 133px;
		top: 328px;
		width: 242px;
		height: 134px;
	}
	.pathfinder .tab:first-child {
		width: 68px;
	}
	.pathfinder .tab:nth-child(2) {
		width: 41px;
	}
	.pathfinder .tab:nth-child(3) {
		width: 66px;
	}
	.pf-body {
		padding: 6px 6px 0 5px;
	}
	.pf-body p {
		margin: 0;
		line-height: 12px;
	}
	.pf-row {
		display: flex;
		align-items: center;
		height: 20px;
	}
	.modes-row {
		gap: 18px;
		margin-top: 8px;
		padding-left: 4px;
	}
	.expand {
		width: 84px;
		margin-left: -3px;
		border-color: #343434;
		background: #4b4b4b;
		color: #858585;
		letter-spacing: -0.200px;
	}
	.pf-body .second-label {
		margin-top: 8px;
	}
	.finder-row {
		gap: 21px;
		margin-top: 8px;
		padding-left: 8px;
	}

	.panel.swatches {
		left: 892px;
		top: 178px;
		width: 242px;
		height: 151px;
	}
	.sw-body {
		display: flex;
		box-sizing: border-box;
		height: 87px;
		margin: 6px 5px 0;
		border: 1px solid #303030;
	}
	.sw-list {
		flex: 1;
		overflow: hidden;
	}
	.sw-row {
		display: flex;
		gap: 1px;
		height: 14px;
	}
	.sw-row:nth-child(5) {
		margin: 2px 0;
	}
	.chip {
		width: 13px;
		height: 13px;
	}
	.chip.none {
		box-sizing: border-box;
		border: 1px solid #fff;
		outline: 1px solid #000;
		outline-offset: -2px;
		background: linear-gradient(135deg, #fff 42%, #e0102f 42% 58%, #fff 58%);
	}
	.chip.reg {
		background: #fff;
	}
	.chip.bw {
		background: linear-gradient(90deg, #fff, #222);
	}
	.chip.orange {
		background: linear-gradient(90deg, #ffe13b, #f26a2a);
	}
	.chip.blue {
		background: linear-gradient(110deg, #2c86c8 20%, transparent), repeating-conic-gradient(#d7e6ee 0 25%, #97bfd9 0 50%) 0 0 / 4px 4px;
	}
	.chip.spot {
		background: radial-gradient(circle, #ddd 0 4.500px, #111 5px);
	}
	.chip.leaf {
		background: radial-gradient(circle, #cf5 1px, transparent 2px) 0 0 / 5px 5px, radial-gradient(#58a81a 3px, #d9f0c0 6px);
	}
	.chip.tex {
		background: repeating-conic-gradient(#ead6bd 0 20%, #7b4b2c 0 45%, #c69b74 0 60%) 0 0 / 5px 4px;
	}
	.sw-scroll {
		display: flex;
		flex-direction: column;
		align-items: center;
		justify-content: space-between;
		box-sizing: border-box;
		width: 12px;
		padding: 4px 0;
		background: #333;
	}
	.sw-scroll span {
		width: 11px;
		height: 49px;
		margin-top: -4px;
		background: #8f8f8f;
	}
	.swatches .panel-tools {
		padding-left: 8px;
	}
	.swatches .kind {
		margin: 0 11px 0 68px;
	}
	.swatches .dim-icon + svg {
		margin: 0 14px 0 15px;
	}
	.swatches .panel-tools svg:nth-child(6) {
		margin-left: 15px;
	}
	.panel-tools .resize {
		align-self: flex-end;
		margin: 0 2px 2px auto;
	}

	.panel.layers {
		left: 885px;
		top: 361px;
		width: 242px;
		height: 223px;
	}
	.layer-list {
		box-sizing: border-box;
		height: 159px;
		margin: 6px 5px 0;
		border: 1px solid #262626;
	}
	.layer {
		display: flex;
		align-items: center;
		height: 20px;
		border-bottom: 1px solid #2b2b2b;
		background: linear-gradient(225deg, #ccc 0 4px, #5d6879 4px);
	}
	.eye {
		display: flex;
		align-items: center;
		width: 18px;
		height: 20px;
		padding-left: 2px;
		border-right: 1px solid #333b47;
	}
	.lock {
		width: 20px;
		height: 20px;
		border-right: 1px solid #333b47;
	}
	.tint {
		width: 5px;
		height: 19px;
		border-right: 1px solid #333b47;
		background: #5877f0;
	}
	.tint + i {
		margin-left: 5px;
	}
	.preview {
		width: 16px;
		height: 16px;
		margin: 0 5px 0 9px;
		border: 1px solid #111;
		background: #fff;
	}
	.layer-name {
		width: 101px;
		border-right: 1px solid #333b47;
		line-height: 19px;
	}
	.target {
		display: flex;
		padding-left: 5px;
	}
	.target b {
		width: 7px;
		height: 7px;
		border: 1px solid #bbc2cc;
		border-radius: 50%;
	}
	.layer-tools {
		gap: 14px;
		padding-left: 5px;
	}
	.layer-tools .count {
		width: 79px;
	}
	.layer-tools .resize {
		margin-left: auto;
	}

	/* overlays */
	.big-mark {
		position: absolute;
		left: 72px;
		top: 0;
	}
	.watermark {
		position: absolute;
		left: 0;
		top: 0;
		font-family: 'Liberation Serif', serif;
		font-weight: 400;
		letter-spacing: 0;
		pointer-events: none;
	}
	.keycast {
		position: absolute;
		left: 64px;
		top: 616px;
		width: 1152px;
		height: 80px;
		border-radius: 8px;
		background: linear-gradient(rgba(55, 55, 55, 0.690), rgba(36, 36, 36, 0.700));
		color: #dfdfdf;
		font-size: 61px;
		letter-spacing: 0;
		line-height: 77px;
		text-align: center;
	}
	.tooltip {
		position: absolute;
		left: 57px;
		top: 222px;
		box-sizing: border-box;
		width: 96px;
		height: 18px;
		background: #fcf1c0;
		box-shadow: 0 2px 4px rgba(0, 0, 0, 0.500);
		color: #111;
		font-family: 'Liberation Sans', Arial, sans-serif;
		font-size: 12px;
		font-weight: 400;
		letter-spacing: 0.200px;
		line-height: 18px;
		text-align: center;
	}
	.cursor {
		position: absolute;
		left: 55px;
		top: 204px;
	}
</style>
